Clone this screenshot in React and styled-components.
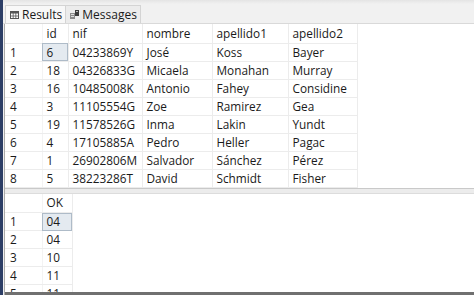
import React from "react";
import styled, { createGlobalStyle } from "styled-components";

const Global = createGlobalStyle`
  html, body { margin: 0; padding: 0; background: #ffffff; }
  body { font-family: "Open Sans", "Noto Sans", "Liberation Sans", sans-serif; }
`;

const Frame = styled.div`
  width: 474px;
  height: 295px;
  display: flex;
  overflow: hidden;
  background: #ffffff;
`;

const Edge = styled.div`
  width: 3px;
  flex: none;
  background: #2c3e66;
`;

const Pane = styled.div`
  flex: 1;
  display: flex;
  flex-direction: column;
  min-width: 0;
  background: #f0f0f0;
`;

const TabBar = styled.div`
  height: 23px;
  flex: none;
  display: flex;
  align-items: flex-end;
  padding-left: 2px;
  background: linear-gradient(#e4e4e4 0, #f1f1f1 4px, #f1f1f1 100%);
  border-bottom: 1px solid #d9d9d9;
`;

const Tab = styled.div`
  height: 17px;
  display: flex;
  align-items: center;
  gap: 3px;
  padding: 0 3px 0 4px;
  border: 1px solid #d4d4d4;
  border-bottom: none;
  margin-right: -1px;
  background: ${(p) => (p.$active ? "#f8f8f8" : "#ececec")};
  font-size: 12px;
  color: #1a1a1a;
  line-height: 1;
`;

const Body = styled.div`
  flex: 1;
  display: flex;
  flex-direction: column;
  min-height: 0;
  margin-left: 1px;
  border-left: 1px solid #a9a9a9;
  background: #ffffff;
`;

const GridBox = styled.div`
  flex: none;
  overflow: hidden;
  ${(p) => (p.$fill ? "flex: 1; min-height: 0;" : "")}
`;

const Table = styled.table`
  border-collapse: collapse;
  table-layout: fixed;
  font-size: 11.8px;
  color: #1a1a1a;
`;

const Cell = styled.td`
  height: ${(p) => (p.$head ? "19px" : "18px")};
  padding: 0 0 0 ${(p) => (p.$num ? "5px" : "4px")};
  border-right: 1px solid ${(p) => (p.$num ? "#f3f3f3" : "#ececec")};
  border-bottom: 1px solid #ececec;
  white-space: nowrap;
  overflow: hidden;
  line-height: 17px;
  box-sizing: border-box;
  vertical-align: middle;
  ${(p) =>
    p.$sel
      ? "background: #e4eaf0; outline: 1px solid #aebbc8; outline-offset: -1px;"
      : ""}
`;

const Splitter = styled.div`
  height: 4px;
  flex: none;
  border-top: 1px solid #c9c9c9;
  border-bottom: 1px solid #dcdcdc;
  background: #ececec;
`;

const BottomBar = styled.div`
  height: 3px;
  flex: none;
  background: #707070;
`;

const GridIcon = () => (
  <svg width="9" height="8" viewBox="0 0 9 8">
    <rect x="0.5" y="0.5" width="8" height="7" fill="#fff" stroke="#555" />
    <rect x="0.5" y="0.5" width="8" height="2" fill="#555" />
    <line x1="3.2" y1="1" x2="3.2" y2="8" stroke="#555" strokeWidth="0.8" />
    <line x1="5.8" y1="1" x2="5.8" y2="8" stroke="#555" strokeWidth="0.8" />
    <line x1="0" y1="5" x2="9" y2="5" stroke="#555" strokeWidth="0.8" />
  </svg>
);

const MsgIcon = () => (
  <svg width="9" height="9" viewBox="0 0 9 9">
    <rect x="0" y="3" width="5" height="6" fill="#8a8a8a" />
    <rect x="1" y="4" width="3" height="1" fill="#ddd" />
    <rect x="1" y="6" width="3" height="1" fill="#ddd" />
    <rect x="5" y="0" width="4" height="6" fill="#3a3a3a" />
    <rect x="6" y="1" width="2" height="1" fill="#bbb" />
  </svg>
);

const cols1 = [
  { key: "n", w: 37 },
  { key: "id", w: 26, label: "id" },
  { key: "nif", w: 74, label: "nif" },
  { key: "nombre", w: 70, label: "nombre" },
  { key: "a1", w: 76, label: "apellido1" },
  { key: "a2", w: 69, label: "apellido2" },
];

const rows1 = [
  ["6", "04233869Y", "José", "Koss", "Bayer"],
  ["18", "04326833G", "Micaela", "Monahan", "Murray"],
  ["16", "10485008K", "Antonio", "Fahey", "Considine"],
  ["3", "11105554G", "Zoe", "Ramirez", "Gea"],
  ["19", "11578526G", "Inma", "Lakin", "Yundt"],
  ["4", "17105885A", "Pedro", "Heller", "Pagac"],
  ["1", "26902806M", "Salvador", "Sánchez", "Pérez"],
  ["5", "38223286T", "David", "Schmidt", "Fisher"],
];

const rows2 = ["04", "04", "10", "11", "11"];

function Grid({ cols, rows }) {
  return (
    <Table style={{ width: cols.reduce((s, c) => s + c.w, 0) }}>
      <colgroup>
        {cols.map((c) => (
          <col key={c.key} style={{ width: c.w }} />
        ))}
      </colgroup>
      <tbody>
        <tr>
          {cols.map((c, i) => (
            <Cell key={c.key} $head $num={i === 0}>
              {c.label || ""}
            </Cell>
          ))}
        </tr>
        {rows.map((r, ri) => (
          <tr key={ri}>
            <Cell $num>{ri + 1}</Cell>
            {r.map((v, ci) => (
              <Cell key={ci} $sel={ri === 0 && ci === 0}>
                {v}
              </Cell>
            ))}
          </tr>
        ))}
      </tbody>
    </Table>
  );
}

export default function App() {
  return (
    <>
      <Global />
      <Frame>
        <Edge />
        <Pane>
          <TabBar>
            <Tab $active>
              <GridIcon />
              Results
            </Tab>
            <Tab>
              <MsgIcon />
              Messages
            </Tab>
          </TabBar>
          <Body>
            <GridBox>
              <Grid cols={cols1} rows={rows1} />
            </GridBox>
            <Splitter />
            <GridBox $fill>
              <Grid
                cols={[
                  { key: "n", w: 37 },
                  { key: "ok", w: 30, label: "OK" },
                ]}
                rows={rows2.map((v) => [v])}
              />
            </GridBox>
            <BottomBar />
          </Body>
        </Pane>
      </Frame>
    </>
  );
}
